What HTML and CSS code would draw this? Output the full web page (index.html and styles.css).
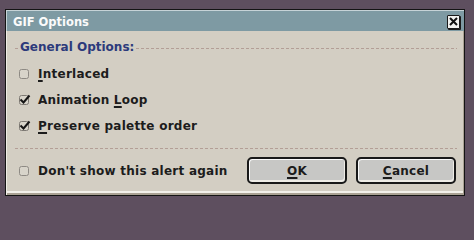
FILE: index.html
```html
<!DOCTYPE html>
<html>
<head>
<meta charset="utf-8">
<link rel="stylesheet" href="styles.css">
</head>
<body>
<div class="dialog">
  <div class="titlebar">
    <span class="title">GIF Options</span>
    <span class="close"><svg width="9" height="9" viewBox="0 0 9 9"><path d="M1 1 L8 8 M8 1 L1 8" stroke="#111" stroke-width="2" fill="none"/></svg></span>
  </div>
  <div class="body">
    <div class="group-head">
      <span class="dash lead"></span>
      <span class="group-label">General Options:</span>
      <span class="dash fill"></span>
    </div>
    <div class="row">
      <span class="cb"><svg width="13" height="12" viewBox="0 0 13 12"><rect x="1.5" y="1.5" width="9" height="9" rx="2" fill="#d8d4ca" stroke="#8e8a84"/></svg></span>
      <span class="label"><u>I</u>nterlaced</span>
    </div>
    <div class="row">
      <span class="cb"><svg width="13" height="12" viewBox="0 0 13 12"><rect x="1.5" y="1.5" width="9" height="9" rx="2" fill="#d8d4ca" stroke="#7e7a74"/><path d="M2.5 5.5 L5.5 8.5 L11.5 1.5" stroke="#151515" stroke-width="2" fill="none"/></svg></span>
      <span class="label">Animation <u>L</u>oop</span>
    </div>
    <div class="row">
      <span class="cb"><svg width="13" height="12" viewBox="0 0 13 12"><rect x="1.5" y="1.5" width="9" height="9" rx="2" fill="#d8d4ca" stroke="#7e7a74"/><path d="M2.5 5.5 L5.5 8.5 L11.5 1.5" stroke="#151515" stroke-width="2" fill="none"/></svg></span>
      <span class="label"><u>P</u>reserve palette order</span>
    </div>
    <div class="sep"></div>
    <div class="footer">
      <div class="row foot-check">
        <span class="cb"><svg width="13" height="12" viewBox="0 0 13 12"><rect x="1.5" y="1.5" width="9" height="9" rx="2" fill="#d8d4ca" stroke="#8e8a84"/></svg></span>
        <span class="label">Don't show this alert again</span>
      </div>
      <div class="buttons">
        <span class="btn"><u>O</u>K</span>
        <span class="btn"><u>C</u>ancel</span>
      </div>
    </div>
  </div>
</div>
</body>
</html>
```
FILE: styles.css
```css
html, body {
  margin: 0;
  padding: 0;
  background: #5e4f5f;
}
body {
  padding: 9px 0 0 5px;
  font-family: "DejaVu Sans", "Liberation Sans", sans-serif;
  font-weight: bold;
  font-size: 12px;
}
.dialog {
  width: 458px;
  height: 185px;
  border: 1px solid #141414;
  display: flex;
  flex-direction: column;
  background: #d3cec3;
}
.titlebar {
  height: 20px;
  background: #7e9aa3;
  box-shadow: inset 1px 1px 0 #c6d3d7;
  display: flex;
  align-items: center;
  justify-content: space-between;
  padding: 1px 0 0 7px;
}
.title {
  color: #fbfbfb;
  font-size: 11.5px;
  line-height: 12px;
  padding-top: 2px;
}
.close {
  width: 11px;
  height: 12px;
  background: #f2f2f0;
  border: 1px solid #1a1a1a;
  box-shadow: 1px 1px 0 #1a1a1a;
  border-radius: 1px;
  display: flex;
  align-items: center;
  justify-content: center;
  margin-right: 4px;
  margin-top: 1px;
}
.body {
  flex: 1;
  padding: 9px 7px 0 9px;
  box-shadow: inset 1px 0 0 #f0ede6, inset -1px 0 0 #a8a092, inset 0 -2px 0 #a9a193, inset 0 -4px 0 #f3f1ea;
}
.group-head {
  height: 14px;
  display: flex;
  align-items: center;
}
.dash {
  height: 1px;
  background: repeating-linear-gradient(90deg, #b39e96 0 3px, transparent 3px 5px);
  margin-top: 2px;
}
.dash.lead {
  width: 4px;
  margin-right: 1px;
}
.dash.fill {
  flex: 1;
  margin-left: 2px;
}
.group-label {
  color: #2c3a7b;
  line-height: 14px;
}
.row {
  height: 26px;
  display: flex;
  align-items: center;
  padding-left: 3px;
  color: #1c1c1c;
}
.group-head + .row {
  margin-top: 7px;
}
.cb {
  width: 13px;
  height: 12px;
  display: flex;
  margin-right: 7px;
}
.label {
  line-height: 14px;
  letter-spacing: 0.25px;
}
u {
  text-decoration-thickness: 2px;
  text-underline-offset: 2px;
}
.sep {
  height: 1px;
  margin-top: 9px;
  background: repeating-linear-gradient(90deg, #b39e96 0 3px, transparent 3px 5px);
}
.footer {
  margin-top: 8px;
  display: flex;
  align-items: center;
  justify-content: space-between;
  padding-right: 1px;
}
.foot-check {
  height: 27px;
}
.buttons {
  display: flex;
  gap: 9px;
}
.btn {
  width: 96px;
  height: 23px;
  border: 2px solid #191919;
  border-radius: 5px;
  background: #c7c7c5;
  box-shadow: inset 1px 1px 0 #fafafa, inset -1px -2px 0 #eeece6;
  display: flex;
  align-items: center;
  justify-content: center;
  color: #1c1c1c;
  letter-spacing: 0.25px;
}
```
